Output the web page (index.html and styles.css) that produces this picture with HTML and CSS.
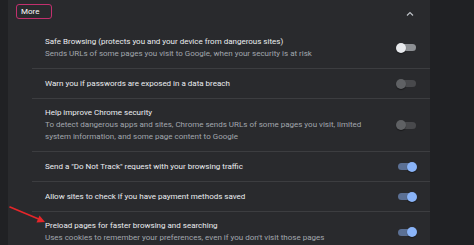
FILE: index.html
```html
<!DOCTYPE html>
<html lang="en">
<head>
    <meta charset="UTF-8">
    <meta name="viewport" content="width=device-width, initial-scale=1.0">
    <title>Settings - Privacy and security</title>
<link rel="stylesheet" href="styles.css">
</head>
<body>
    <div class="page">
        <div class="card">
            <div class="section-head">
                <span class="more-label">More</span>
                <svg class="caret" width="8" height="6" viewBox="0 0 8 6">
                    <path d="M1 4.5 L4 1.5 L7 4.5" fill="none" stroke="#bdc1c6" stroke-width="1.2"/>
                </svg>
            </div>

            <div class="rows">
                <div class="row">
                    <div class="row-text">
                        <div class="title">Safe Browsing (protects you and your device from dangerous sites)</div>
                        <div class="desc">Sends URLs of some pages you visit to Google, when your security is at risk</div>
                    </div>
                    <span class="toggle"></span>
                </div>
                <div class="row">
                    <div class="row-text">
                        <div class="title">Warn you if passwords are exposed in a data breach</div>
                    </div>
                    <span class="toggle disabled"></span>
                </div>
                <div class="row">
                    <div class="row-text">
                        <div class="title">Help improve Chrome security</div>
                        <div class="desc">To detect dangerous apps and sites, Chrome sends URLs of some pages you visit, limited system information, and some page content to Google</div>
                    </div>
                    <span class="toggle disabled"></span>
                </div>
                <div class="row">
                    <div class="row-text">
                        <div class="title">Send a "Do Not Track" request with your browsing traffic</div>
                    </div>
                    <span class="toggle on"></span>
                </div>
                <div class="row">
                    <div class="row-text">
                        <div class="title">Allow sites to check if you have payment methods saved</div>
                    </div>
                    <span class="toggle on"></span>
                </div>
                <div class="row">
                    <div class="row-text">
                        <div class="title">Preload pages for faster browsing and searching</div>
                        <div class="desc">Uses cookies to remember your preferences, even if you don't visit those pages</div>
                    </div>
                    <span class="toggle on"></span>
                </div>
            </div>
        </div>
    </div>

    <!-- annotation arrow pointing at the preload row -->
    <svg class="arrow" width="40" height="24" viewBox="0 0 40 24">
        <line x1="2" y1="3" x2="33" y2="16" stroke="#e5262a" stroke-width="1.6" stroke-linecap="round"/>
        <path d="M37 18 L28.5 18.5 L31.5 11.5 Z" fill="#e5262a"/>
    </svg>
</body>
</html>
```

FILE: styles.css
```css
* {
    margin: 0;
    padding: 0;
    box-sizing: border-box;
}

body {
    font-family: Roboto, "Noto Sans", sans-serif;
    background-color: #202124;
    color: #e8eaed;
    height: 245px;
    overflow: hidden;
    position: relative;
}

.page {
    display: flex;
    height: 100%;
    padding-left: 8px;
}

.card {
    width: 422px;
    height: 100%;
    background-color: #292a2d;
}

/* Section header */
.section-head {
    display: flex;
    align-items: center;
    justify-content: space-between;
    height: 27px;
    padding: 0 16px 2px 8px;
}

.more-label {
    display: inline-block;
    font-size: 8px;
    line-height: 11px;
    color: #ffffff;
    padding: 1px 12px 1px 4px;
    border: 1.5px solid #c2306e;
    border-radius: 3px;
    margin-top: -2px;
}

.caret {
    margin-top: 2px;
}

/* Setting rows */
.rows {
    margin-left: 24px;
}

.row {
    display: flex;
    align-items: center;
    min-height: 30px;
    padding: 8px 13px 8px 13px;
    border-top: 1px solid #3c3d40;
}

.row:first-child {
    border-top: none;
    min-height: 41px;
}

.row-text {
    flex: 1;
    padding-right: 30px;
}

.title {
    font-size: 8px;
    line-height: 12px;
    color: #eceef1;
}

.desc {
    font-size: 8px;
    line-height: 12px;
    color: #a2a7ad;
}

/* Toggles */
.toggle {
    position: relative;
    flex: none;
    width: 21px;
    height: 10px;
}

.toggle::before {
    content: "";
    position: absolute;
    left: 2px;
    right: 1px;
    top: 1.5px;
    height: 7px;
    border-radius: 4px;
    background-color: #8d9094;
}

.toggle::after {
    content: "";
    position: absolute;
    left: 0;
    top: 0;
    width: 10px;
    height: 10px;
    border-radius: 50%;
    background-color: #e8eaed;
    box-shadow: 0 1px 1px rgba(0, 0, 0, 0.4);
}

.toggle.disabled::before {
    background-color: #48494c;
}

.toggle.disabled::after {
    background-color: #5f6164;
}

.toggle.on::before {
    background-color: #5b7094;
}

.toggle.on::after {
    left: auto;
    right: 0;
    background-color: #8ab4f8;
}

/* Annotation */
.arrow {
    position: absolute;
    left: 8px;
    top: 204px;
}
```
